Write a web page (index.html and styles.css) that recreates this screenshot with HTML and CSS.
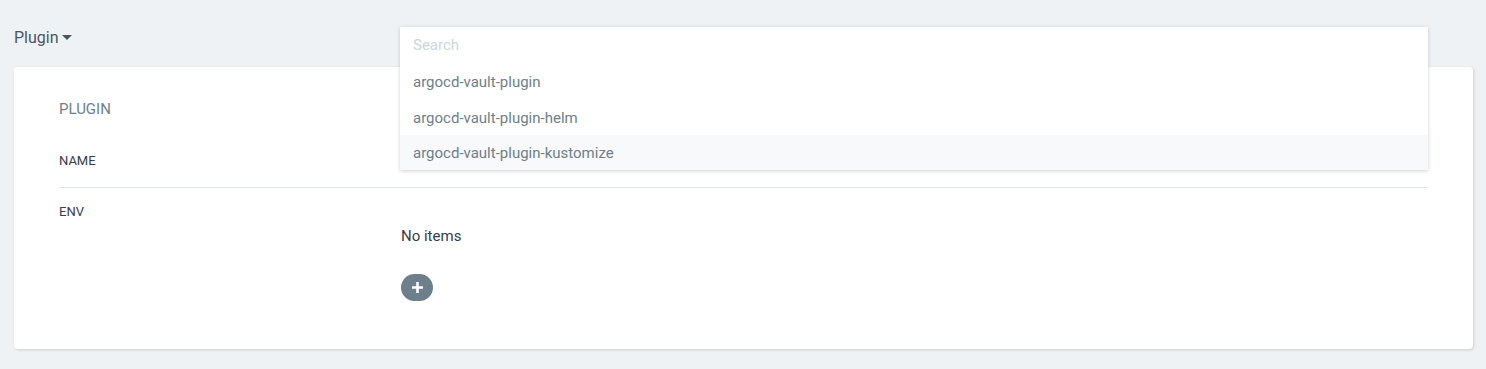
FILE: index.html
```html
<!DOCTYPE html>
<html>
<head>
    <meta charset="UTF-8">
    <title>Plugin</title>
    <link rel="stylesheet" href="styles.css">
</head>
<body>
    <div class="page">
        <div class="top">
            <div class="toggle">Plugin <span class="caret"></span></div>
        </div>

        <div class="card">
            <div class="card-title">PLUGIN</div>
            <div class="row name">
                <div class="label">NAME</div>
                <div class="value"></div>
            </div>
            <div class="row env">
                <div class="label">ENV</div>
                <div class="value">
                    <p class="empty">No items</p>
                    <button class="add">
                        <svg width="13" height="13" viewBox="0 0 12 12"><path d="M6 1v10M1 6h10" stroke="#fff" stroke-width="2.4"/></svg>
                    </button>
                </div>
            </div>
        </div>

        <!-- menu abierto del selector -->
        <div class="menu">
            <div class="menu-search">Search</div>
            <div class="menu-item">argocd-vault-plugin</div>
            <div class="menu-item">argocd-vault-plugin-helm</div>
            <div class="menu-item active">argocd-vault-plugin-kustomize</div>
        </div>
    </div>
</body>
</html>
```

FILE: styles.css
```css
body {
    margin: 0;
    font-family: Roboto, "Liberation Sans", sans-serif;
    background-color: #eff2f5;
    color: #363c4a;
}
.page {
    position: relative;
    padding: 0 13px 20px 14px;
}
.top {
    height: 67px;
    display: flex;
    align-items: center;
    padding-top: 7px;
    box-sizing: border-box;
}
.toggle {
    font-size: 16px;
    color: #495763;
    display: flex;
    align-items: center;
    gap: 3px;
}
.caret {
    width: 0;
    height: 0;
    border-left: 5px solid transparent;
    border-right: 5px solid transparent;
    border-top: 5px solid #495763;
    margin-top: 1px;
}
.card {
    background-color: #ffffff;
    border-radius: 4px;
    box-shadow: 1px 1px 3px rgba(0, 0, 0, 0.15);
    padding: 32px 45px 0 45px;
    height: 282px;
    box-sizing: border-box;
}
.card-title {
    font-size: 15px;
    line-height: 20px;
    color: #6d7f8b;
    height: 54px;
}
.row {
    display: flex;
    font-size: 13px;
    line-height: 16px;
}
.label {
    width: 342px;
}
.name {
    height: 34px;
    border-bottom: 1px solid #dee6eb;
}
.env {
    padding-top: 16px;
}
.empty {
    margin: 22px 0 0 0;
    font-size: 15px;
    line-height: 20px;
}
.add {
    margin-top: 28px;
    width: 32px;
    height: 27px;
    border: none;
    border-radius: 14px;
    background-color: #6d7f8b;
    display: flex;
    align-items: center;
    justify-content: center;
    padding: 0;
}
.menu {
    position: absolute;
    top: 27px;
    left: 400px;
    width: 1028px;
    background-color: #ffffff;
    box-shadow: 0 1px 4px rgba(0, 0, 0, 0.18);
    font-size: 15px;
    color: #6d7f8b;
}
.menu-search {
    height: 37px;
    line-height: 37px;
    padding-left: 13px;
    color: #ccd6dd;
}
.menu-item {
    height: 35.5px;
    line-height: 36px;
    padding-left: 13px;
}
.menu-item.active {
    height: 35px;
    background-color: #f7f9fa;
}
```
